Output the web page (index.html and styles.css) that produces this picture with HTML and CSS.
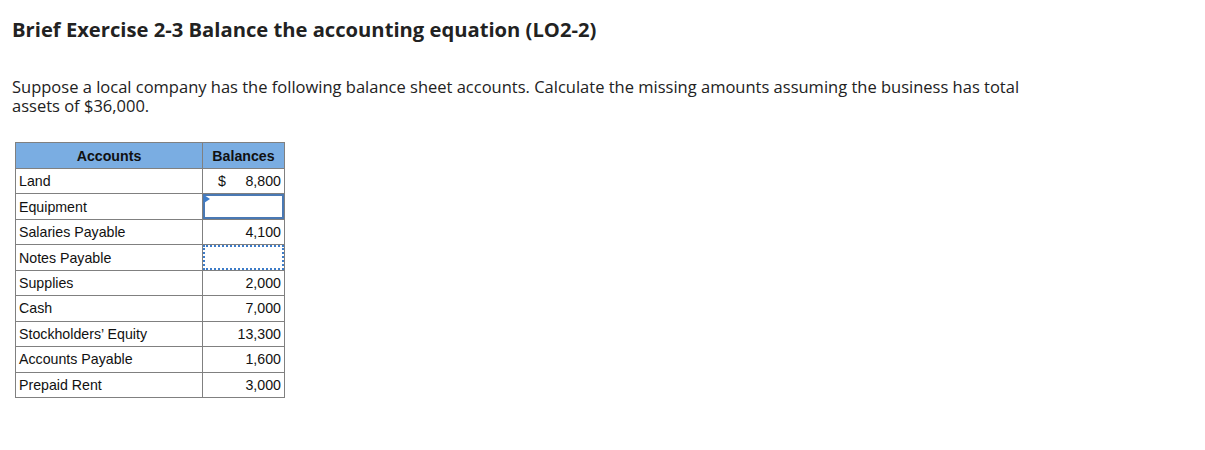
FILE: index.html
```html
<!DOCTYPE html>
<html>
<head>
<meta charset="utf-8">
<link rel="stylesheet" href="styles.css">
</head>
<body>
<div class="page">
  <h1 class="title">Brief Exercise 2-3 Balance the accounting equation (LO2-2)</h1>
  <p class="prompt">Suppose a local company has the following balance sheet accounts. Calculate the missing amounts assuming the business has total assets of $36,000.</p>
  <table class="sheet">
    <thead>
      <tr><th class="acc">Accounts</th><th class="bal">Balances</th></tr>
    </thead>
    <tbody>
      <tr><td class="acc">Land</td><td class="bal"><span class="cur">$</span><span>8,800</span></td></tr>
      <tr><td class="acc">Equipment</td><td class="bal input"><div class="box solid"><span class="flag"></span></div></td></tr>
      <tr><td class="acc">Salaries Payable</td><td class="bal">4,100</td></tr>
      <tr><td class="acc">Notes Payable</td><td class="bal input"><div class="box dotted"></div></td></tr>
      <tr><td class="acc">Supplies</td><td class="bal">2,000</td></tr>
      <tr><td class="acc">Cash</td><td class="bal">7,000</td></tr>
      <tr><td class="acc">Stockholders’ Equity</td><td class="bal">13,300</td></tr>
      <tr><td class="acc">Accounts Payable</td><td class="bal">1,600</td></tr>
      <tr><td class="acc">Prepaid Rent</td><td class="bal">3,000</td></tr>
    </tbody>
  </table>
</div>
</body>
</html>
```
FILE: styles.css
```css
html, body { margin: 0; padding: 0; background: #fff; }
.page { padding: 17px 0 0 12px; color: #222; font-family: "Open Sans", Lato, sans-serif; }
.title { margin: 0; font-size: 20.2px; font-weight: 700; line-height: 24px; color: #222; }
.prompt { margin: 36px 0 0 0; width: 1030px; font-size: 16.5px; line-height: 19px; color: #222; }
.sheet { margin: 27px 0 0 3px; border-collapse: collapse; font-family: "Liberation Sans", Arial, sans-serif; font-size: 14.2px; color: #111; }
.sheet th, .sheet td { border: 1px solid #808080; padding: 0 3px; height: 25.44px; box-sizing: border-box; }
.sheet th { background: #7aade2; font-weight: 700; height: 26px; text-align: center; }
.sheet th.acc, .sheet td.acc { width: 187px; }
.sheet th.bal, .sheet td.bal { width: 82px; }
.sheet td.acc { text-align: left; }
.sheet td.bal { text-align: right; }
.sheet td.bal .cur { float: left; padding-left: 12px; }
.sheet td.input { padding: 0; position: relative; }
.box { position: absolute; left: 0; top: 0; right: 0; bottom: 0; }
.box.solid { border: 2px solid #4a79b4; }
.box.dotted { border: 2px dotted #3d7cc9; }
.flag { position: absolute; left: -1px; top: -1px; width: 0; height: 0; border-top: 4px solid transparent; border-bottom: 4px solid transparent; border-left: 6px solid #3d7cc9; }
```
